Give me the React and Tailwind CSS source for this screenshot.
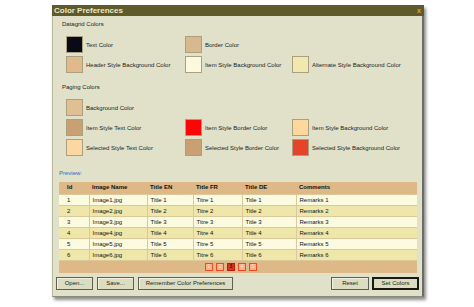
import React from "react";

const font = { fontFamily: '"Liberation Sans", Arial, sans-serif' };

function Swatch({ color, label }) {
  return (
    <div className="flex items-center h-[17px]">
      <div className="w-[17px] h-[17px] border border-[#a8a080] shrink-0" style={{ background: color }} />
      <span className="ml-[3px] text-[6px] leading-[8px] text-[#222]">{label}</span>
    </div>
  );
}

const rows = [1, 2, 3, 4, 5, 6];

export default function App() {
  return (
    <div className="w-[474px] h-[307px] bg-white overflow-hidden" style={font}>
      <div className="ml-[52px] mt-[5px] w-[372px] h-[292px] flex flex-col shadow-[2px_3px_3px_rgba(0,0,0,0.45)]">
        <div className="h-[11px] bg-[#5e5a2a] flex items-center justify-between pl-[2px] pr-[3px]">
          <span className="text-[8px] font-bold leading-[10px] text-[#ece8cc]">Color Preferences</span>
          <span className="text-[7px] leading-[7px] font-bold text-[#e8a040]">x</span>
        </div>
        <div className="flex-1 bg-[#e1e1c9] border-l border-[#b8b8a0] border-r-2 border-r-[#6c6c64] border-b border-b-[#8a8a78] flex flex-col">
          <div className="pl-[9px] pt-[4px] text-[6px] leading-[8px] text-[#222]">Datagrid Colors</div>
          <div className="mt-[8px] pl-[13px] grid grid-cols-[119px_107px_auto] gap-y-[3px]">
            <Swatch color="#0a0a16" label="Text Color" />
            <Swatch color="#d8b88e" label="Border Color" />
            <div />
            <Swatch color="#e2b98a" label="Header Style Background Color" />
            <Swatch color="#fbfade" label="Item Style Background Color" />
            <Swatch color="#f0e8ac" label="Alternate Style Background Color" />
          </div>
          <div className="pl-[9px] mt-[10px] text-[6px] leading-[8px] text-[#222]">Paging Colors</div>
          <div className="mt-[8px] pl-[13px] grid grid-cols-[119px_107px_auto] gap-y-[3px]">
            <Swatch color="#e0c092" label="Background Color" />
            <div />
            <div />
            <Swatch color="#c9a072" label="Item Style Text Color" />
            <Swatch color="#fb0505" label="Item Style Border Color" />
            <Swatch color="#fdd79c" label="Item Style Background Color" />
            <Swatch color="#fdd7a0" label="Selected Style Text Color" />
            <Swatch color="#c9a072" label="Selected Style Border Color" />
            <Swatch color="#e4442a" label="Selected Style Background Color" />
          </div>
          <div className="pl-[6px] mt-[13px] text-[6px] leading-[8px] text-[#3a62c8]">Preview:</div>
          <div className="ml-[6px] mt-[5px] w-[358px] bg-[#deb887]">
            <table className="w-[358px] table-fixed border-collapse text-[6px] text-[#111]">
              <colgroup>
                <col className="w-[30px]" />
                <col className="w-[58px]" />
                <col className="w-[46px]" />
                <col className="w-[49px]" />
                <col className="w-[54px]" />
                <col />
              </colgroup>
              <thead>
                <tr className="h-[12px] bg-[#deb887] font-bold text-left">
                  <th className="pl-[8px] font-bold">Id</th>
                  <th className="pl-[3px] font-bold">Image Name</th>
                  <th className="pl-[3px] font-bold">Title EN</th>
                  <th className="pl-[3px] font-bold">Title FR</th>
                  <th className="pl-[3px] font-bold">Title DE</th>
                  <th className="pl-[3px] font-bold">Comments</th>
                </tr>
              </thead>
              <tbody>
                {rows.map((n) => (
                  <tr key={n} className={n % 2 === 1 ? "h-[11px] bg-[#fcfbe0]" : "h-[11px] bg-[#efe6aa]"}>
                    <td className="pl-[8px] border border-[#dcc89a] border-l-0 leading-[8px]">{n}</td>
                    <td className="pl-[3px] border border-[#dcc89a] leading-[8px]">{"Image" + n + ".jpg"}</td>
                    <td className="pl-[3px] border border-[#dcc89a] leading-[8px]">{"Title " + n}</td>
                    <td className="pl-[3px] border border-[#dcc89a] leading-[8px]">{"Titre " + n}</td>
                    <td className="pl-[3px] border border-[#dcc89a] leading-[8px]">{"Title " + n}</td>
                    <td className="pl-[3px] border border-[#dcc89a] border-r-0 leading-[8px]">{"Remarks " + n}</td>
                  </tr>
                ))}
              </tbody>
            </table>
            <div className="h-[12px] flex items-center pl-[146px] gap-[3px]">
              {[1, 2, 3, 4, 5].map((p) =>
                p === 3 ? (
                  <div key={p} className="w-[8px] h-[8px] bg-[#e03418] border border-[#b02010] flex items-center justify-center text-[5px] leading-[5px] font-bold text-[#5a1008]">
                    {p}
                  </div>
                ) : (
                  <div key={p} className="w-[8px] h-[8px] bg-[#f2b48a] border border-[#ee4a2a] flex items-center justify-center text-[5px] leading-[5px] text-[#fbe0c8]">
                    {p}
                  </div>
                )
              )}
            </div>
          </div>
          <div className="mt-[4px] px-[3px] flex items-center">
            <button className="h-[13px] w-[37px] bg-[#dcdcc0] border border-[#5e5e54] text-[6px] leading-[6px] text-[#222] shadow-[inset_1px_1px_0_#f2f2e4]">Open...</button>
            <button className="ml-[4px] h-[13px] w-[37px] bg-[#dcdcc0] border border-[#5e5e54] text-[6px] leading-[6px] text-[#222] shadow-[inset_1px_1px_0_#f2f2e4]">Save...</button>
            <button className="ml-[4px] h-[13px] w-[95px] bg-[#dcdcc0] border border-[#5e5e54] text-[6px] leading-[6px] text-[#222] shadow-[inset_1px_1px_0_#f2f2e4]">Remember Color Preferences</button>
            <button className="ml-auto h-[13px] w-[38px] bg-[#dcdcc0] border border-[#5e5e54] text-[6px] leading-[6px] text-[#222] shadow-[inset_1px_1px_0_#f2f2e4]">Reset</button>
            <button className="ml-[3px] h-[13px] w-[47px] bg-[#dcdcc0] border-2 border-[#1a1a14] text-[6px] leading-[6px] text-[#222]">Set Colors</button>
          </div>
        </div>
      </div>
    </div>
  );
}
